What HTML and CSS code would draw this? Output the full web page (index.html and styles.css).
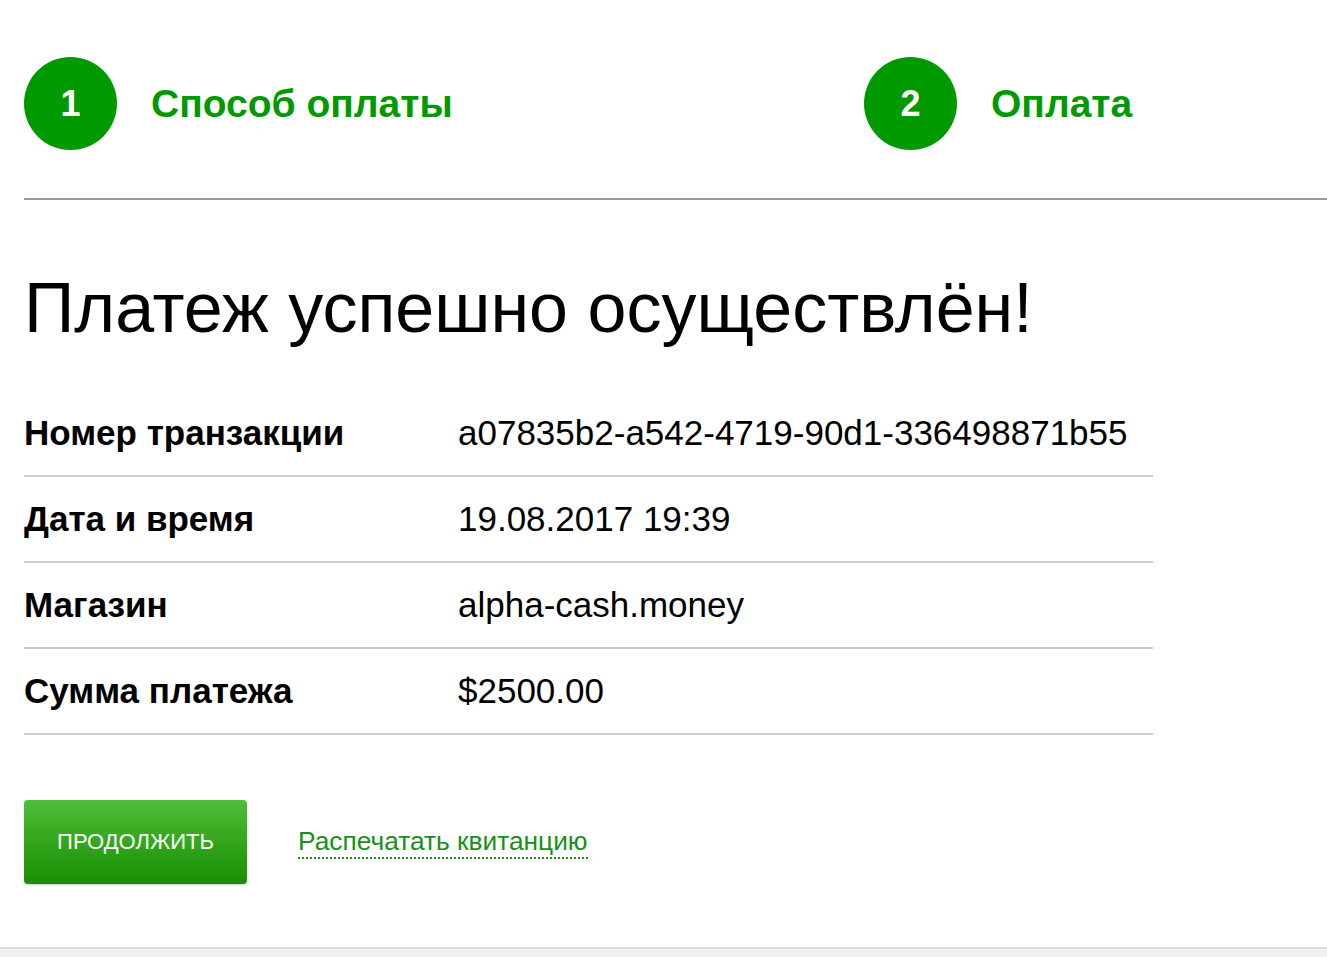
FILE: index.html
```html
<!DOCTYPE html>
<html>
<head>
    <meta charset="UTF-8">
    <title>Платеж успешно осуществлён</title>
    <link rel="stylesheet" href="styles.css">
</head>
<body>
    <div class="steps">
        <div class="step step-first">
            <span class="step-num">1</span>
            <span class="step-title">Способ оплаты</span>
        </div>
        <div class="step">
            <span class="step-num">2</span>
            <span class="step-title">Оплата</span>
        </div>
    </div>

    <h1 class="title">Платеж успешно осуществлён!</h1>

    <div class="details">
        <div class="row">
            <div class="label">Номер транзакции</div>
            <div class="value">a07835b2-a542-4719-90d1-336498871b55</div>
        </div>
        <div class="row">
            <div class="label">Дата и время</div>
            <div class="value">19.08.2017 19:39</div>
        </div>
        <div class="row">
            <div class="label">Магазин</div>
            <div class="value">alpha-cash.money</div>
        </div>
        <div class="row">
            <div class="label">Сумма платежа</div>
            <div class="value">$2500.00</div>
        </div>
    </div>

    <div class="actions">
        <button class="btn">ПРОДОЛЖИТЬ</button>
        <a href="#" class="print-link">Распечатать квитанцию</a>
    </div>

    <div class="footer-edge"></div>
</body>
</html>
```

FILE: styles.css
```css
body {
    font-family: Arial, "Liberation Sans", sans-serif;
    background-color: #fff;
    color: #000;
    margin: 0;
    padding: 0 0 0 24px;
    height: 957px;
    box-sizing: border-box;
    position: relative;
    overflow: hidden;
}

.steps {
    display: flex;
    padding-top: 57px;
    padding-bottom: 48px;
    border-bottom: 2px solid #999; /* Linea gris */
}

.step {
    display: flex;
    align-items: center;
}

.step-first {
    width: 840px;
}

.step-num {
    width: 93px;
    height: 93px;
    border-radius: 50%;
    background-color: #009a00; /* Verde */
    color: #fff;
    font-size: 36px;
    font-weight: bold;
    display: flex;
    align-items: center;
    justify-content: center;
}

.step-title {
    margin-left: 34px;
    color: #009a00;
    font-size: 39px;
    font-weight: bold;
}

.title {
    font-size: 70px;
    font-weight: normal;
    margin: 70px 0 0 0;
    line-height: 76px;
}

.details {
    width: 1129px;
    margin-top: 45px;
}

.row {
    display: flex;
    align-items: center;
    height: 84px;
    border-bottom: 2px solid #ccc; /* Separador */
}

.label {
    width: 434px;
    font-size: 35px;
    font-weight: bold;
}

.value {
    font-size: 35px;
}

.actions {
    display: flex;
    align-items: center;
    margin-top: 65px;
}

.btn {
    width: 223px;
    height: 84px;
    border: none;
    border-radius: 4px;
    background: linear-gradient(#4fbe38, #178f03); /* Degradado verde */
    color: #fff;
    font-family: Arial, "Liberation Sans", sans-serif;
    font-size: 22px;
    cursor: pointer;
    box-shadow: 0 1px 2px rgba(0, 0, 0, 0.2);
}

.print-link {
    margin-left: 51px;
    color: #1a8f1a;
    font-size: 26.3px;
    text-decoration: none;
    border-bottom: 2px dotted #1a8f1a;
    line-height: 32px;
}

.footer-edge {
    position: absolute;
    left: 0;
    right: 0;
    bottom: 0;
    height: 8px;
    background-color: #f0f0f0;
    border-top: 2px solid #ddd;
}
```
